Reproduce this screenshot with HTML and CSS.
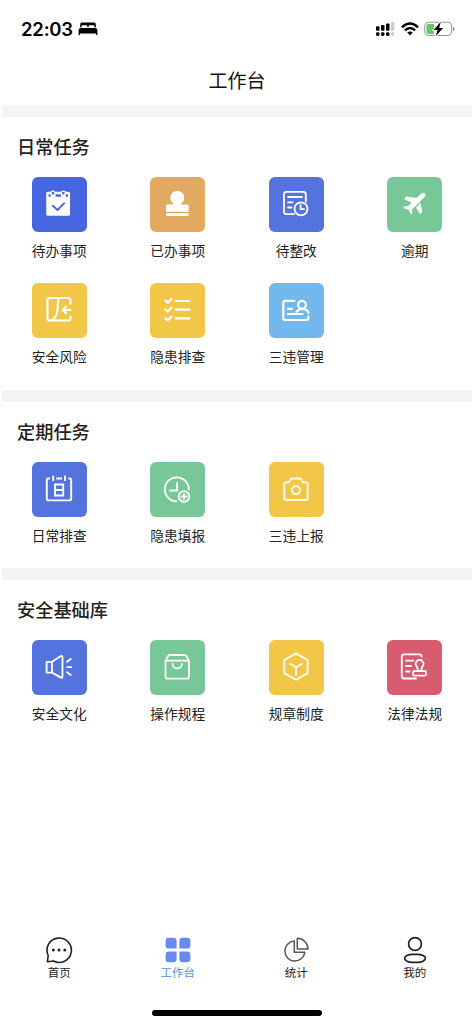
FILE: index.html
```html
<!DOCTYPE html>
<html lang="zh-CN">
<head>
<meta charset="utf-8">
<title>工作台</title>
<link rel="stylesheet" href="styles.css">
</head>
<body>
<div class="app">
  <header class="status">
    <span class="time">22:03</span>
    <svg class="bed" width="20" height="14" viewBox="0 0 20 14"><path d="M2.2 5.600V2.200Q2.200.5 4 .5H16Q17.800.5 17.800 2.200V5.600H16.500V4.500Q16.500 3.300 15.300 3.300H11.800Q10.600 3.300 10.600 4.500V5.300H9.400V4.500Q9.400 3.300 8.200 3.300H4.700Q3.500 3.300 3.500 4.500V5.600ZM.6 13V8.200Q.6 6 3 6H17Q19.400 6 19.400 8.200V13H18V11.500H2V13Z"/></svg>
    <div class="status-right">
      <svg width="20" height="16" viewBox="0 0 20 16"><g fill="#000"><rect x="1" y="5.300" width="3.500" height="4.500" rx="1"/><rect x="6" y="4" width="3.500" height="5.800" rx="1"/><rect x="11" y="2.500" width="3.500" height="7.300" rx="1"/><rect x="1" y="11.300" width="3.500" height="3.600" rx="1.300"/><rect x="6" y="11.300" width="3.500" height="3.600" rx="1.300"/><rect x="11" y="11.300" width="3.500" height="3.600" rx="1.300"/></g><g fill="#ccc"><rect x="16" y="1" width="3.300" height="8.800" rx="1"/><rect x="16" y="11.300" width="3.300" height="3.600" rx="1.300"/></g></svg>
      <svg class="wifi" width="18" height="14" viewBox="0 0 18 14"><g fill="none" stroke="#000" stroke-width="2.500"><path d="M1 5.300Q9-2.200 17 5.300"/><path d="M3.900 8.400Q9 3.600 14.100 8.400"/></g><path d="M6.200 10.600Q9 8.400 11.800 10.600L9 13.600Z"/></svg>
      <svg class="battery" width="31" height="16" viewBox="0 0 31 16"><rect x=".8" y="1.300" width="26.800" height="13.200" rx="4" fill="#fff" stroke="#999" stroke-width="1.100"/><path d="M29 6Q30.600 6.500 30.600 8T29 10Z" fill="#888"/><path d="M4.500 3H10V13H4.500Q2.500 13 2.500 11V5Q2.500 3 4.500 3Z" fill="#65c466"/><path d="M16.800.8L9.600 9H13.500L11.800 15L19.200 6.900H15.200Z" stroke="#fff" stroke-width="1.600" paint-order="stroke"/></svg>
    </div>
  </header>
  <h1 class="page-title">工作台</h1>

  <section class="group group-daily">
    <h2>日常任务</h2>
    <div class="grid">
      <a class="item"><svg class="tile royal" viewBox="0 0 55 55"><rect x="14.300" y="14.800" width="23.700" height="24" rx="1.500" fill="#fff"/><path d="M16.500 17.200H36V19.700H16.500Z" fill="#4667e0"/><path d="M18.700 20V17H23.500V20ZM29 20V17H33.600V20Z" fill="#fff"/><circle cx="21" cy="16.200" r="2" fill="#4667e0" stroke="#fff" stroke-width="1.200"/><circle cx="31.300" cy="16.200" r="2" fill="#4667e0" stroke="#fff" stroke-width="1.200"/><path class="line" stroke="#4667e0" d="M20.700 28.800L25.500 33L32.300 26.200"/></svg><span>待办事项</span></a>
      <a class="item"><svg class="tile orange" viewBox="0 0 55 55"><g fill="#fff"><circle cx="27.300" cy="20.800" r="7"/><path d="M23.500 24H31V27.500H37Q38.700 27.500 38.700 29.200V34.800H16V29.200Q16 27.500 17.700 27.500H23.500Z"/><path d="M16 36.200H38.700V38Q38.700 39 37.700 39H17Q16 39 16 38Z"/></g></svg><span>已办事项</span></a>
      <a class="item"><svg class="tile blue" viewBox="0 0 55 55"><g class="line"><path d="M25 37.200H17.500Q15 37.200 15 34.700V17.300Q15 14.800 17.500 14.800H34.300Q36.800 14.800 36.800 17.300V24.500M19 20H33M19 25.300H23.500M19 30.500H22.500"/><circle cx="32" cy="31.800" r="6.500"/><path d="M31.600 28V32.200H35"/></g></svg><span>待整改</span></a>
      <a class="item"><svg class="tile green" viewBox="0 0 55 55"><g fill="#fff"><path d="M37.700 16.200Q39.400 17.800 37.200 20.300L25 32.800L25.300 36.200Q25 37.600 24 37.100L21.300 32.800L17 31.200Q16 30.300 17 29.600L21 29.300L24.500 25.700L17.500 22.200Q17.400 20.900 18.500 19.900Q19.200 19.300 20.200 19.500L29.700 21L33.800 17Q36 14.800 37.700 16.200Z"/><path d="M29 30.700L33.300 25.600L35.200 34.200Q35.200 36.200 33 37Z"/></g></svg><span>逾期</span></a>
      <a class="item"><svg class="tile yellow" viewBox="0 0 55 55"><g class="line bold"><path d="M38.400 20.500V17.300Q38.400 15 36.100 15H17.700Q15.400 15 15.400 17.300V35.200Q15.400 37.500 17.700 37.500H36.100Q38.400 37.500 38.400 35.200V33.500M26.500 15.300Q25.800 20 25.700 25Q25.500 33.500 20 37.200M38.400 27H31M34 23.700L30.800 27L34 30.300"/></g></svg><span>安全风险</span></a>
      <a class="item"><svg class="tile yellow" viewBox="0 0 55 55"><g class="line bold"><path d="M15.500 17.700L17.800 19.700L21.500 15.800M15.500 26.500L17.800 28.500L21.500 24.600M15.500 35.300L17.800 37.300L21.500 33.400M25.700 18H39.500M25.700 26.700H39.500M25.700 35.400H39.500"/></g></svg><span>隐患排查</span></a>
      <a class="item"><svg class="tile sky" viewBox="0 0 55 55"><g class="line bold"><path d="M25.500 17.800H16.200Q14.300 17.800 14.300 19.700V35Q14.300 37 16.300 37H37.500Q39.300 37 39.300 35V33.500M18.700 25.800H23M18.700 31H33.500"/><circle cx="33" cy="21.700" r="3.900"/><path d="M27.500 29Q29 25.800 33 25.800Q38.500 26 39.400 29.800"/></g></svg><span>三违管理</span></a>
    </div>
  </section>

  <section class="group group-regular">
    <h2>定期任务</h2>
    <div class="grid">
      <a class="item"><svg class="tile blue" viewBox="0 0 55 55"><g class="line square"><path d="M18 16.500H16.300Q14.800 16.500 14.800 18V36.500Q14.800 38.400 16.700 38.400H37.200Q39.200 38.400 39.200 36.500V18Q39.200 16.500 37.700 16.500H36.400M24.300 16.500H30M21.200 13.800V19M33 13.800V19M23 22.500H31.200V33.500H23ZM23 28H31.200"/></g></svg><span>日常排查</span></a>
      <a class="item"><svg class="tile green" viewBox="0 0 55 55"><g class="line"><path d="M26.500 39.300A12 12 0 1 1 38.800 27.500M27 21V28.500H20"/><circle cx="34" cy="34.500" r="5.300"/><path d="M31.400 34.500H36.600M34 31.900V37.100"/></g></svg><span>隐患填报</span></a>
      <a class="item"><svg class="tile yellow" viewBox="0 0 55 55"><g class="line"><path d="M19.800 20.300L21.500 17.600Q22 16.500 23.200 16.500H30.500Q31.700 16.500 32.300 17.600L34 20.300H36.700Q38.700 20.300 38.700 22.300V35.800Q38.700 37.800 36.700 37.800H17.300Q15.300 37.800 15.300 35.800V22.300Q15.300 20.300 17.300 20.300Z"/><circle cx="27" cy="28.200" r="4"/></g></svg><span>三违上报</span></a>
    </div>
  </section>

  <section class="group group-library">
    <h2>安全基础库</h2>
    <div class="grid">
      <a class="item"><svg class="tile blue" viewBox="0 0 55 55"><g class="line"><path d="M20 21.800H14.600V32.600H20ZM20 21.800L28.500 16.200Q30.500 15.200 30.500 17.200V36.300Q30.500 38.500 28.500 37.400L20 32.600M35 21.800L38.800 19M35.200 27.200H39.300M35 32.300L38.800 35"/></g></svg><span>安全文化</span></a>
      <a class="item"><svg class="tile green" viewBox="0 0 55 55"><g class="line"><path d="M15.500 20.600L18 16.200Q18.800 15 20 15H34.500Q35.700 15 36.500 16.200L39 20.600V36.500Q39 38.700 36.800 38.700H17.700Q15.500 38.700 15.500 36.500ZM15.500 20.600H39"/><path d="M22.500 24Q23 28.500 27.200 28.500T32 24"/></g></svg><span>操作规程</span></a>
      <a class="item"><svg class="tile yellow" viewBox="0 0 55 55"><g class="line"><path d="M27 13.400L38.600 20V33.200L27 39.800L15.300 33.200V20ZM27 35V27.200M21 23.700L27 27.200L33 23.700"/></g></svg><span>规章制度</span></a>
      <a class="item"><svg class="tile red" viewBox="0 0 55 55"><g class="line"><path d="M29 38.500H17Q14.800 38.500 14.800 36.300V16.500Q14.800 14.400 17 14.400H32.500Q34.600 14.400 34.600 16.500M19 20.600H26.500M19 26H24M19 31.500H22.500"/><rect x="26" y="31" width="13" height="4.700" rx="1.500"/><path d="M31 31Q31 28.500 29.700 26.500A3.900 3.900 0 1 1 35.500 26.500Q34.200 28.500 34.200 31"/></g></svg><span>法律法规</span></a>
    </div>
  </section>

  <nav class="tabs">
    <a class="tab"><svg viewBox="0 0 28 28"><path d="M2.400 25.700L3.200 19.500A12.200 12.200 0 1 1 8.500 25Z" fill="none" stroke="#222" stroke-width="1.600" stroke-linejoin="round"/><g fill="#222"><circle cx="8.300" cy="14" r="1.500"/><circle cx="14" cy="14" r="1.500"/><circle cx="19.800" cy="14" r="1.500"/></g></svg><span>首页</span></a>
    <a class="tab active"><svg viewBox="0 0 28 28"><g fill="#688af0"><path d="M5 1.700H9.200Q12.600 1.700 12.600 5V12.600H5Q1.600 12.600 1.600 9.200V5Q1.600 1.700 5 1.700Z"/><path d="M18.800 1.700H23Q26.400 1.700 26.400 5V9.200Q26.400 12.600 23 12.600H15.400V5Q15.400 1.700 18.800 1.700Z"/><path d="M5 15.400H12.600V23Q12.600 26.300 9.200 26.300H5Q1.600 26.300 1.600 23V18.800Q1.600 15.400 5 15.400Z"/><path d="M15.400 15.400H23Q26.400 15.400 26.400 18.800V23Q26.400 26.300 23 26.300H18.800Q15.400 26.300 15.400 23Z"/></g></svg><span>工作台</span></a>
    <a class="tab"><svg viewBox="0 0 28 28"><g fill="none" stroke="#555" stroke-width="1.500" stroke-linejoin="round"><path d="M12.300 5.100A10 10 0 1 0 22.800 16.300H12.300Z"/><path d="M15.300 2.300V13H26A10.700 10.700 0 0 0 15.300 2.300Z"/></g></svg><span>统计</span></a>
    <a class="tab"><svg viewBox="0 0 28 28"><g fill="none" stroke="#222" stroke-width="1.700"><circle cx="14" cy="8" r="6.400"/><rect x="3.600" y="18.400" width="20.800" height="7.900" rx="8" ry="3.950"/></g></svg><span>我的</span></a>
  </nav>
  <div class="home-bar"></div>
</div>
</body>
</html>
```
FILE: styles.css
```css
* { box-sizing: border-box; }
body {
  margin: 0;
  background: #fff;
  color: #222;
  font-family: "Noto Sans CJK SC", sans-serif;
}
.app {
  width: 474px;
  height: 1025px;
  display: flex;
  flex-direction: column;
  overflow: hidden;
}
.status {
  height: 56px;
  display: flex;
  align-items: center;
  padding: 1px 19px 0 21px;
}
.time {
  font: 600 18.500px/24px Inter, sans-serif;
  letter-spacing: -0.200px;
  padding-top: 1px;
  color: #000;
}
.bed { margin-left: 5px; }
.status-right {
  margin-left: auto;
  display: flex;
  align-items: center;
}
.wifi { margin: 0 5px 0 6px; }
.page-title {
  margin: 0;
  height: 49px;
  line-height: 47px;
  text-align: center;
  font-size: 19px;
  font-weight: 400;
  color: #111;
}
.group { padding-top: 29px; position: relative; }
.group::before {
  content: "";
  position: absolute;
  top: 0;
  left: 2px;
  right: 2px;
  height: 12px;
  background: #f4f4f4;
}
.group-daily { height: 285px; }
.group-regular { height: 178px; }
.group-library { height: 180px; }
.group h2 {
  margin: 0 0 19px;
  padding-left: 17px;
  font-size: 18.200px;
  line-height: 24px;
  font-weight: 500;
}
.grid {
  display: grid;
  grid-template-columns: repeat(4, 1fr);
  row-gap: 23.300px;
}
.item {
  display: flex;
  flex-direction: column;
  align-items: center;
  gap: 8px;
  font-size: 13.700px;
  line-height: 20px;
}
.tile {
  width: 55px;
  height: 55px;
  border-radius: 6px;
}
.line {
  fill: none;
  stroke-width: 1.800;
  stroke-linecap: round;
  stroke-linejoin: round;
}
g.line { stroke: #fff; }
.bold { stroke-width: 2.200; }
.square { stroke-linecap: butt; stroke-linejoin: miter; stroke-width: 1.900; }
.royal { background: #4667e0; }
.blue { background: #5573df; }
.orange { background: #e2a961; }
.green { background: #77c798; }
.yellow { background: #f2c747; }
.sky { background: #72b8ec; }
.red { background: #d75c70; }
.tabs {
  margin-top: auto;
  display: grid;
  grid-template-columns: repeat(4, 1fr);
  height: 74px;
}
.tab {
  display: flex;
  flex-direction: column;
  align-items: center;
  font-size: 11.500px;
  line-height: 16px;
}
.tab svg { width: 28px; height: 28px; }
.active { color: #5b8fd9; }
.home-bar {
  width: 170px;
  height: 6px;
  margin: 0 auto 9px;
  border-radius: 3px;
  background: #000;
}
```
